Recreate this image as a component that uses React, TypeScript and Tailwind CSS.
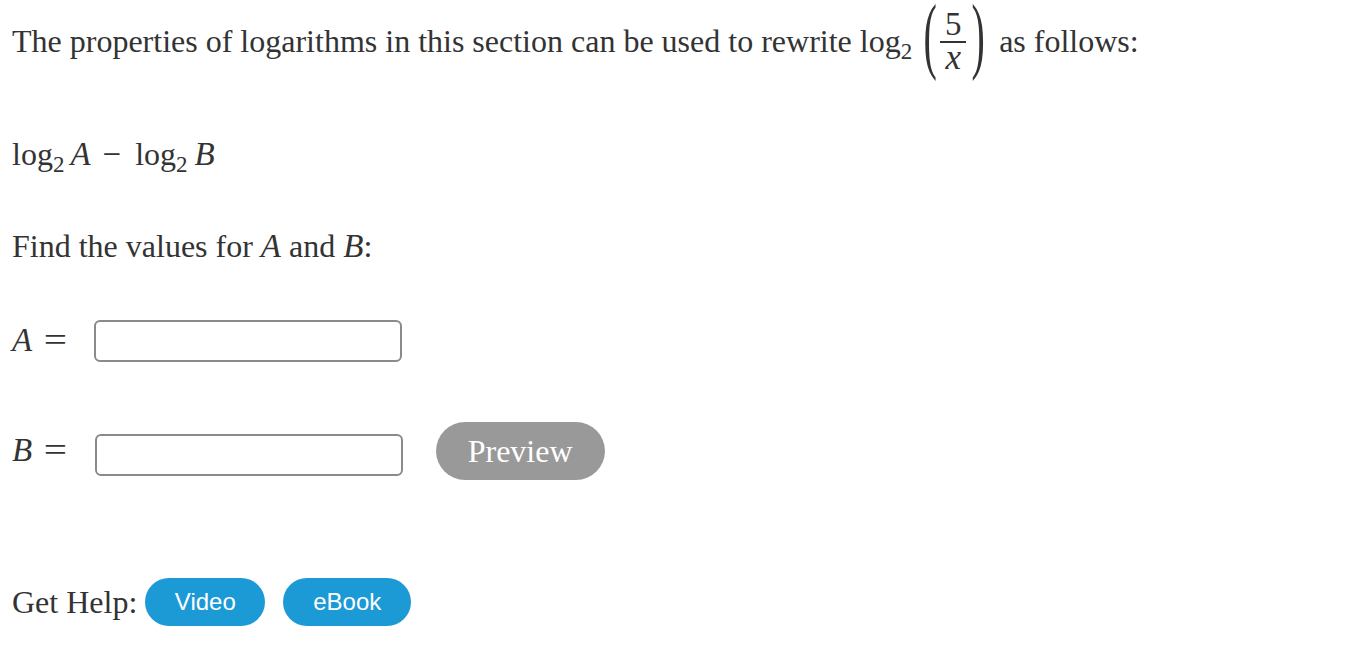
import React from 'react';

const serif = { fontFamily: '"Liberation Serif", "Times New Roman", serif' };

function Sub({ children }: { children: React.ReactNode }) {
  return <span className="text-[23px] align-[-7px]">{children}</span>;
}

function Log() {
  return (
    <span className="text-[32px]">
      log<Sub>2</Sub>
    </span>
  );
}

function Paren({ side }: { side: 'l' | 'r' }) {
  return (
    <div className="flex h-[84px] w-[14px] items-center justify-center">
      <span className="inline-block translate-y-[-6px] scale-y-[2.1] text-[40px] leading-none">
        {side === 'l' ? '(' : ')'}
      </span>
    </div>
  );
}

function Equals() {
  return <span className="inline-block scale-x-[1.25] text-[33px]">=</span>;
}

function AnswerInput({ className = '' }: { className?: string }) {
  return (
    <input
      type="text"
      className={`h-[42px] w-[308px] rounded-md border-2 border-[#8a8a8a] bg-white px-2 text-[24px] outline-none ${className}`}
    />
  );
}

function HelpButton({ label, width }: { label: string; width: string }) {
  return (
    <button
      type="button"
      className={`flex h-[48px] ${width} items-center justify-center rounded-full bg-[#1b9ad6] text-[24px] text-white`}
      style={{ fontFamily: '"Liberation Sans", Arial, sans-serif' }}
    >
      {label}
    </button>
  );
}

export default function App() {
  return (
    <div className="min-h-screen bg-white pl-[12px] text-[#333]" style={serif}>
      {/* intro line with fraction */}
      <div className="flex h-[84px] items-start">
        <span className="mt-[23px] text-[32px] leading-[36px] whitespace-nowrap">
          The properties of logarithms in this section can be used to rewrite
        </span>
        <span className="ml-[8px] mt-[23px] leading-[36px]">
          <Log />
        </span>
        <div className="ml-[11px]">
          <Paren side="l" />
        </div>
        <div className="ml-[3px] mt-[13px] flex w-[26px] flex-col items-center">
          <span className="h-[23px] text-[33px] leading-[23px]">5</span>
          <div className="mt-[5px] h-[2px] w-full bg-[#333]" />
          <span className="mt-[4px] h-[22px] text-[35px] italic leading-[22px]">x</span>
        </div>
        <div className="ml-[5px]">
          <Paren side="r" />
        </div>
        <span className="ml-[14px] mt-[23px] text-[32px] leading-[36px] whitespace-nowrap">as follows:</span>
      </div>

      {/* log2 A - log2 B */}
      <div className="mt-[50px] flex h-[40px] items-baseline leading-[40px]">
        <Log />
        <span className="ml-[6px] text-[33px] italic">A</span>
        <span className="ml-[12px] text-[33px]">−</span>
        <span className="ml-[14px]">
          <Log />
        </span>
        <span className="ml-[7px] text-[33px] italic">B</span>
      </div>

      <div className="mt-[54px] h-[36px] text-[32px] leading-[36px]">
        Find the values for <span className="text-[33px] italic">A</span> and{' '}
        <span className="text-[33px] italic">B</span>:
      </div>

      {/* A = */}
      <div className="mt-[56px] flex h-[42px] items-center">
        <span className="w-[34px] text-[33px] italic">A</span>
        <Equals />
        <AnswerInput className="ml-[29px]" />
      </div>

      {/* B = */}
      <div className="mt-[60px] flex h-[58px] items-center">
        <span className="w-[34px] text-[33px] italic">B</span>
        <Equals />
        <AnswerInput className="ml-[30px] mt-[8px] w-[307px]" />
        <button
          type="button"
          className="ml-[33px] flex h-[58px] w-[169px] items-center justify-center rounded-full bg-[#999] text-[32px] text-white"
        >
          Preview
        </button>
      </div>

      {/* help */}
      <div className="mt-[98px] flex h-[48px] items-center">
        <span className="text-[32px]">Get Help:</span>
        <div className="ml-[8px] flex gap-[18px]">
          <HelpButton label="Video" width="w-[120px]" />
          <HelpButton label="eBook" width="w-[128px]" />
        </div>
      </div>
    </div>
  );
}
